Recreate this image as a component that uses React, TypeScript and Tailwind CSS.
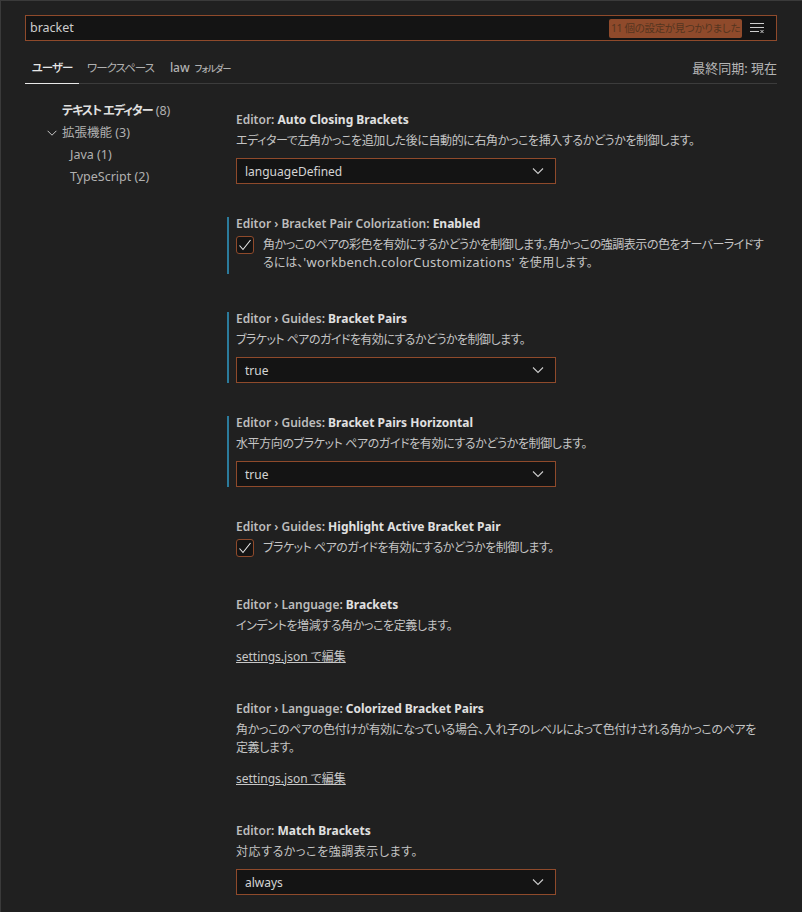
import React from "react";

const font = { fontFamily: '"Noto Sans", "Noto Sans CJK JP", sans-serif' };

function Chevron({ className }: { className: string }) {
  return (
    <svg viewBox="0 0 16 16" className={className} fill="none" stroke="#cccccc" strokeWidth="1.1">
      <path d="M3 5.5 L8 10.5 L13 5.5" />
    </svg>
  );
}

function Title({ pre, bold }: { pre: string; bold: string }) {
  return (
    <div className="h-[18px] leading-[20px] text-[12px] font-semibold text-[#bdbdbd] whitespace-nowrap">
      {pre}
      <span className="text-[#e0e0e0] font-bold">{bold}</span>
    </div>
  );
}

function Select({ value }: { value: string }) {
  return (
    <div className="mt-[8px] h-[26px] w-[320px] bg-[#141414] border border-[#8f4a2b] flex items-center justify-between pl-2 pr-[9px] text-[12px] leading-[20px] text-[#d4d4d4]">
      <span className="pt-px">{value}</span>
      <Chevron className="w-4 h-4" />
    </div>
  );
}

function Check({ text }: { text: React.ReactNode }) {
  return (
    <div className="flex items-start mt-[4px]">
      <div className="w-[18px] h-[18px] shrink-0 rounded-[3px] bg-[#141414] border border-[#8f4a2b] flex items-center justify-center">
        <svg viewBox="0 0 16 16" className="w-4 h-4" fill="none" stroke="#e8e8e8" strokeWidth="1.1">
          <path d="M2.5 8.5 L6 12.5 L13.5 3" />
        </svg>
      </div>
      <div className="ml-[9px] text-[12px] leading-[18px] text-[#c4c4c4] w-[510px] tracking-[-0.5px] [font-feature-settings:'palt']">{text}</div>
    </div>
  );
}

function Desc({ children }: { children: React.ReactNode }) {
  return <div className="mt-[4px] text-[12px] leading-[18px] text-[#c4c4c4] w-[530px] tracking-[-0.4px] [font-feature-settings:'palt']">{children}</div>;
}

function Link() {
  return <div className="mt-[13px] h-[18px] leading-[18px] text-[12px] text-[#c8c8c8] underline [font-feature-settings:'palt']">settings.json で編集</div>;
}

function Item({ top, modified, bar, children }: { top: number; modified?: boolean; bar?: number; children: React.ReactNode }) {
  return (
    <div className="relative" style={{ marginTop: top }}>
      {modified && <span className="absolute left-[-9px] top-[3px] w-[2px] bg-[#2b7b9c]" style={{ height: bar }} />}
      {children}
    </div>
  );
}

export default function App() {
  return (
    <div style={font} className="w-[802px] h-[912px] overflow-hidden bg-[#202020] border-t border-l border-[#3a3a3a] text-[13px]">
      <div className="ml-[24px] mt-[14px] w-[752px] h-[26px] bg-[#141414] border border-[#8f4a2b] flex items-center pl-1 pr-[11px]">
        <span className="text-[12.5px] text-[#cccccc] flex-1 pt-px">bracket</span>
        <span className="h-[19px] w-[133px] bg-[#8f4a2b] rounded-[2px] text-[10.5px] leading-[19px] text-[#55351f] text-center whitespace-nowrap tracking-[-0.35px] [font-feature-settings:'palt']">11 個の設定が見つかりました</span>
        <svg viewBox="0 0 16 16" className="w-4 h-4 ml-[7px]" fill="none" stroke="#cccccc">
          <path d="M1 3.5H15M1 7.5H15M1 11.5H10" />
          <path d="M11.5 10 L14.5 13 M14.5 10 L11.5 13" strokeWidth="1" />
        </svg>
      </div>
      <div className="ml-[24px] w-[752px] h-[42px] mt-[1px] flex border-b border-[#3c3c3c] relative [font-feature-settings:'palt']">
        <div className="mt-[16px] w-[54px] h-[26px] -mb-px border-b border-[#e8e8e8] text-[11.5px] font-medium text-[#e7e7e7] text-center leading-[20px] tracking-[-1px]">ユーザー</div>
        <div className="mt-[16px] ml-[8px] text-[11.5px] text-[#b0b0b0] leading-[20px] tracking-[-1px]">ワークスペース</div>
        <div className="mt-[16px] ml-[16px] text-[12px] text-[#b0b0b0] leading-[20px] font-medium">law<span className="ml-[5px] text-[9px] tracking-[-0.8px]">フォルダー</span></div>
        <div className="mt-[16px] ml-auto text-[13px] text-[#b4b4b4] leading-[20px]">最終同期: 現在</div>
      </div>
      <div className="flex">
        <div className="w-[235px] shrink-0 pt-[16px] text-[12.5px] leading-[22px] text-[#b0b0b0] [font-feature-settings:'palt']">
          <div className="ml-[61px]"><span className="font-bold text-[#e0e0e0] tracking-[-1px] text-[12px]">テキスト エディター</span> (8)</div>
          <div className="flex items-center ml-[44px]"><Chevron className="w-[14px] h-[14px] mr-[3px]" />拡張機能 (3)</div>
          <div className="ml-[69px]">Java (1)</div>
          <div className="ml-[69px]">TypeScript (2)</div>
        </div>
        <div className="flex-1">
          <Item top={26}>
            <Title pre="Editor: " bold="Auto Closing Brackets" />
            <Desc>エディターで左角かっこを追加した後に自動的に右角かっこを挿入するかどうかを制御します。</Desc>
            <Select value="languageDefined" />
          </Item>
          <Item top={30} modified bar={57}>
            <Title pre="Editor › Bracket Pair Colorization: " bold="Enabled" />
            <Check text={<>角かっこのペアの彩色を有効にするかどうかを制御します。角かっこの強調表示の色をオーバーライドす<br /><span className="tracking-normal">るには、</span><span className="text-[13px] leading-none tracking-[0.3px]">'workbench.colorCustomizations'</span><span className="tracking-[0.4px]"> を使用します。</span></>} />
          </Item>
          <Item top={37} modified bar={71}>
            <Title pre="Editor › Guides: " bold="Bracket Pairs" />
            <Desc><span className="tracking-[-0.55px]">ブラケット ペアのガイドを有効にするかどうかを制御します。</span></Desc>
            <Select value="true" />
          </Item>
          <Item top={30} modified bar={71}>
            <Title pre="Editor › Guides: " bold="Bracket Pairs Horizontal" />
            <Desc>水平方向のブラケット ペアのガイドを有効にするかどうかを制御します。</Desc>
            <Select value="true" />
          </Item>
          <Item top={30}>
            <Title pre="Editor › Guides: " bold="Highlight Active Bracket Pair" />
            <Check text="ブラケット ペアのガイドを有効にするかどうかを制御します。" />
          </Item>
          <Item top={38}>
            <Title pre="Editor › Language: " bold="Brackets" />
            <Desc>インデントを増減する角かっこを定義します。</Desc>
            <Link />
          </Item>
          <Item top={33}>
            <Title pre="Editor › Language: " bold="Colorized Bracket Pairs" />
            <Desc>角かっこのペアの色付けが有効になっている場合、入れ子のレベルによって色付けされる角かっこのペアを<br />定義します。</Desc>
            <Link />
          </Item>
          <Item top={33}>
            <Title pre="Editor: " bold="Match Brackets" />
            <Desc><span className="tracking-[0.55px]">対応するかっこを強調表示します。</span></Desc>
            <Select value="always" />
          </Item>
        </div>
      </div>
    </div>
  );
}
